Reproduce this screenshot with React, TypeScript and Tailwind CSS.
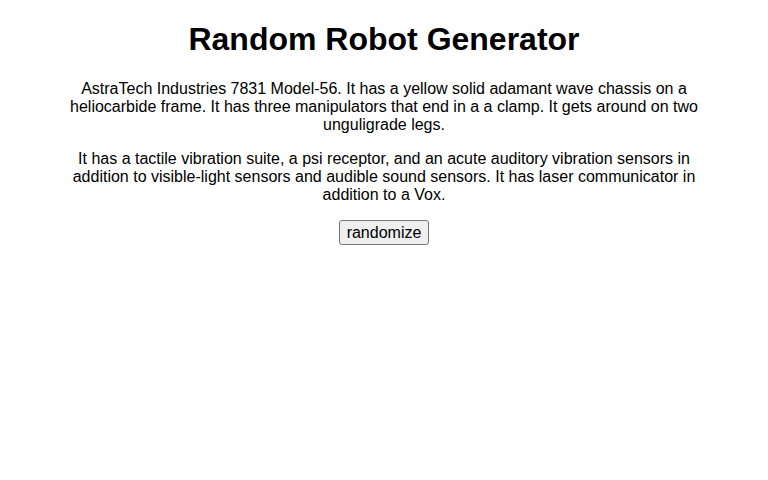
export default function App() {
  return (
    <div className="min-h-[480px] bg-white text-center text-black" style={{ fontFamily: '"Liberation Sans", Arial, sans-serif' }}>
      <div className="mx-auto max-w-[640px] pt-[21px]">
        <h1 className="mb-[22px] text-[32px] font-bold leading-[37px]">Random Robot Generator</h1>
        <p className="mb-4 text-base leading-[18px]">
          AstraTech Industries 7831 Model-56. It has a yellow solid adamant wave chassis on a heliocarbide frame. It has
          three manipulators that end in a a clamp. It gets around on two unguligrade legs.
        </p>
        <p className="mb-4 text-base leading-[18px]">
          It has a tactile vibration suite, a psi receptor, and an acute auditory vibration sensors in addition to
          visible-light sensors and audible sound sensors. It has laser communicator in addition to a Vox.
        </p>
        <button className="rounded-[3px] border border-[#767676] bg-[#efefef] px-[7px] py-[2px] text-base leading-[19px] text-black">
          randomize
        </button>
      </div>
    </div>
  );
}
